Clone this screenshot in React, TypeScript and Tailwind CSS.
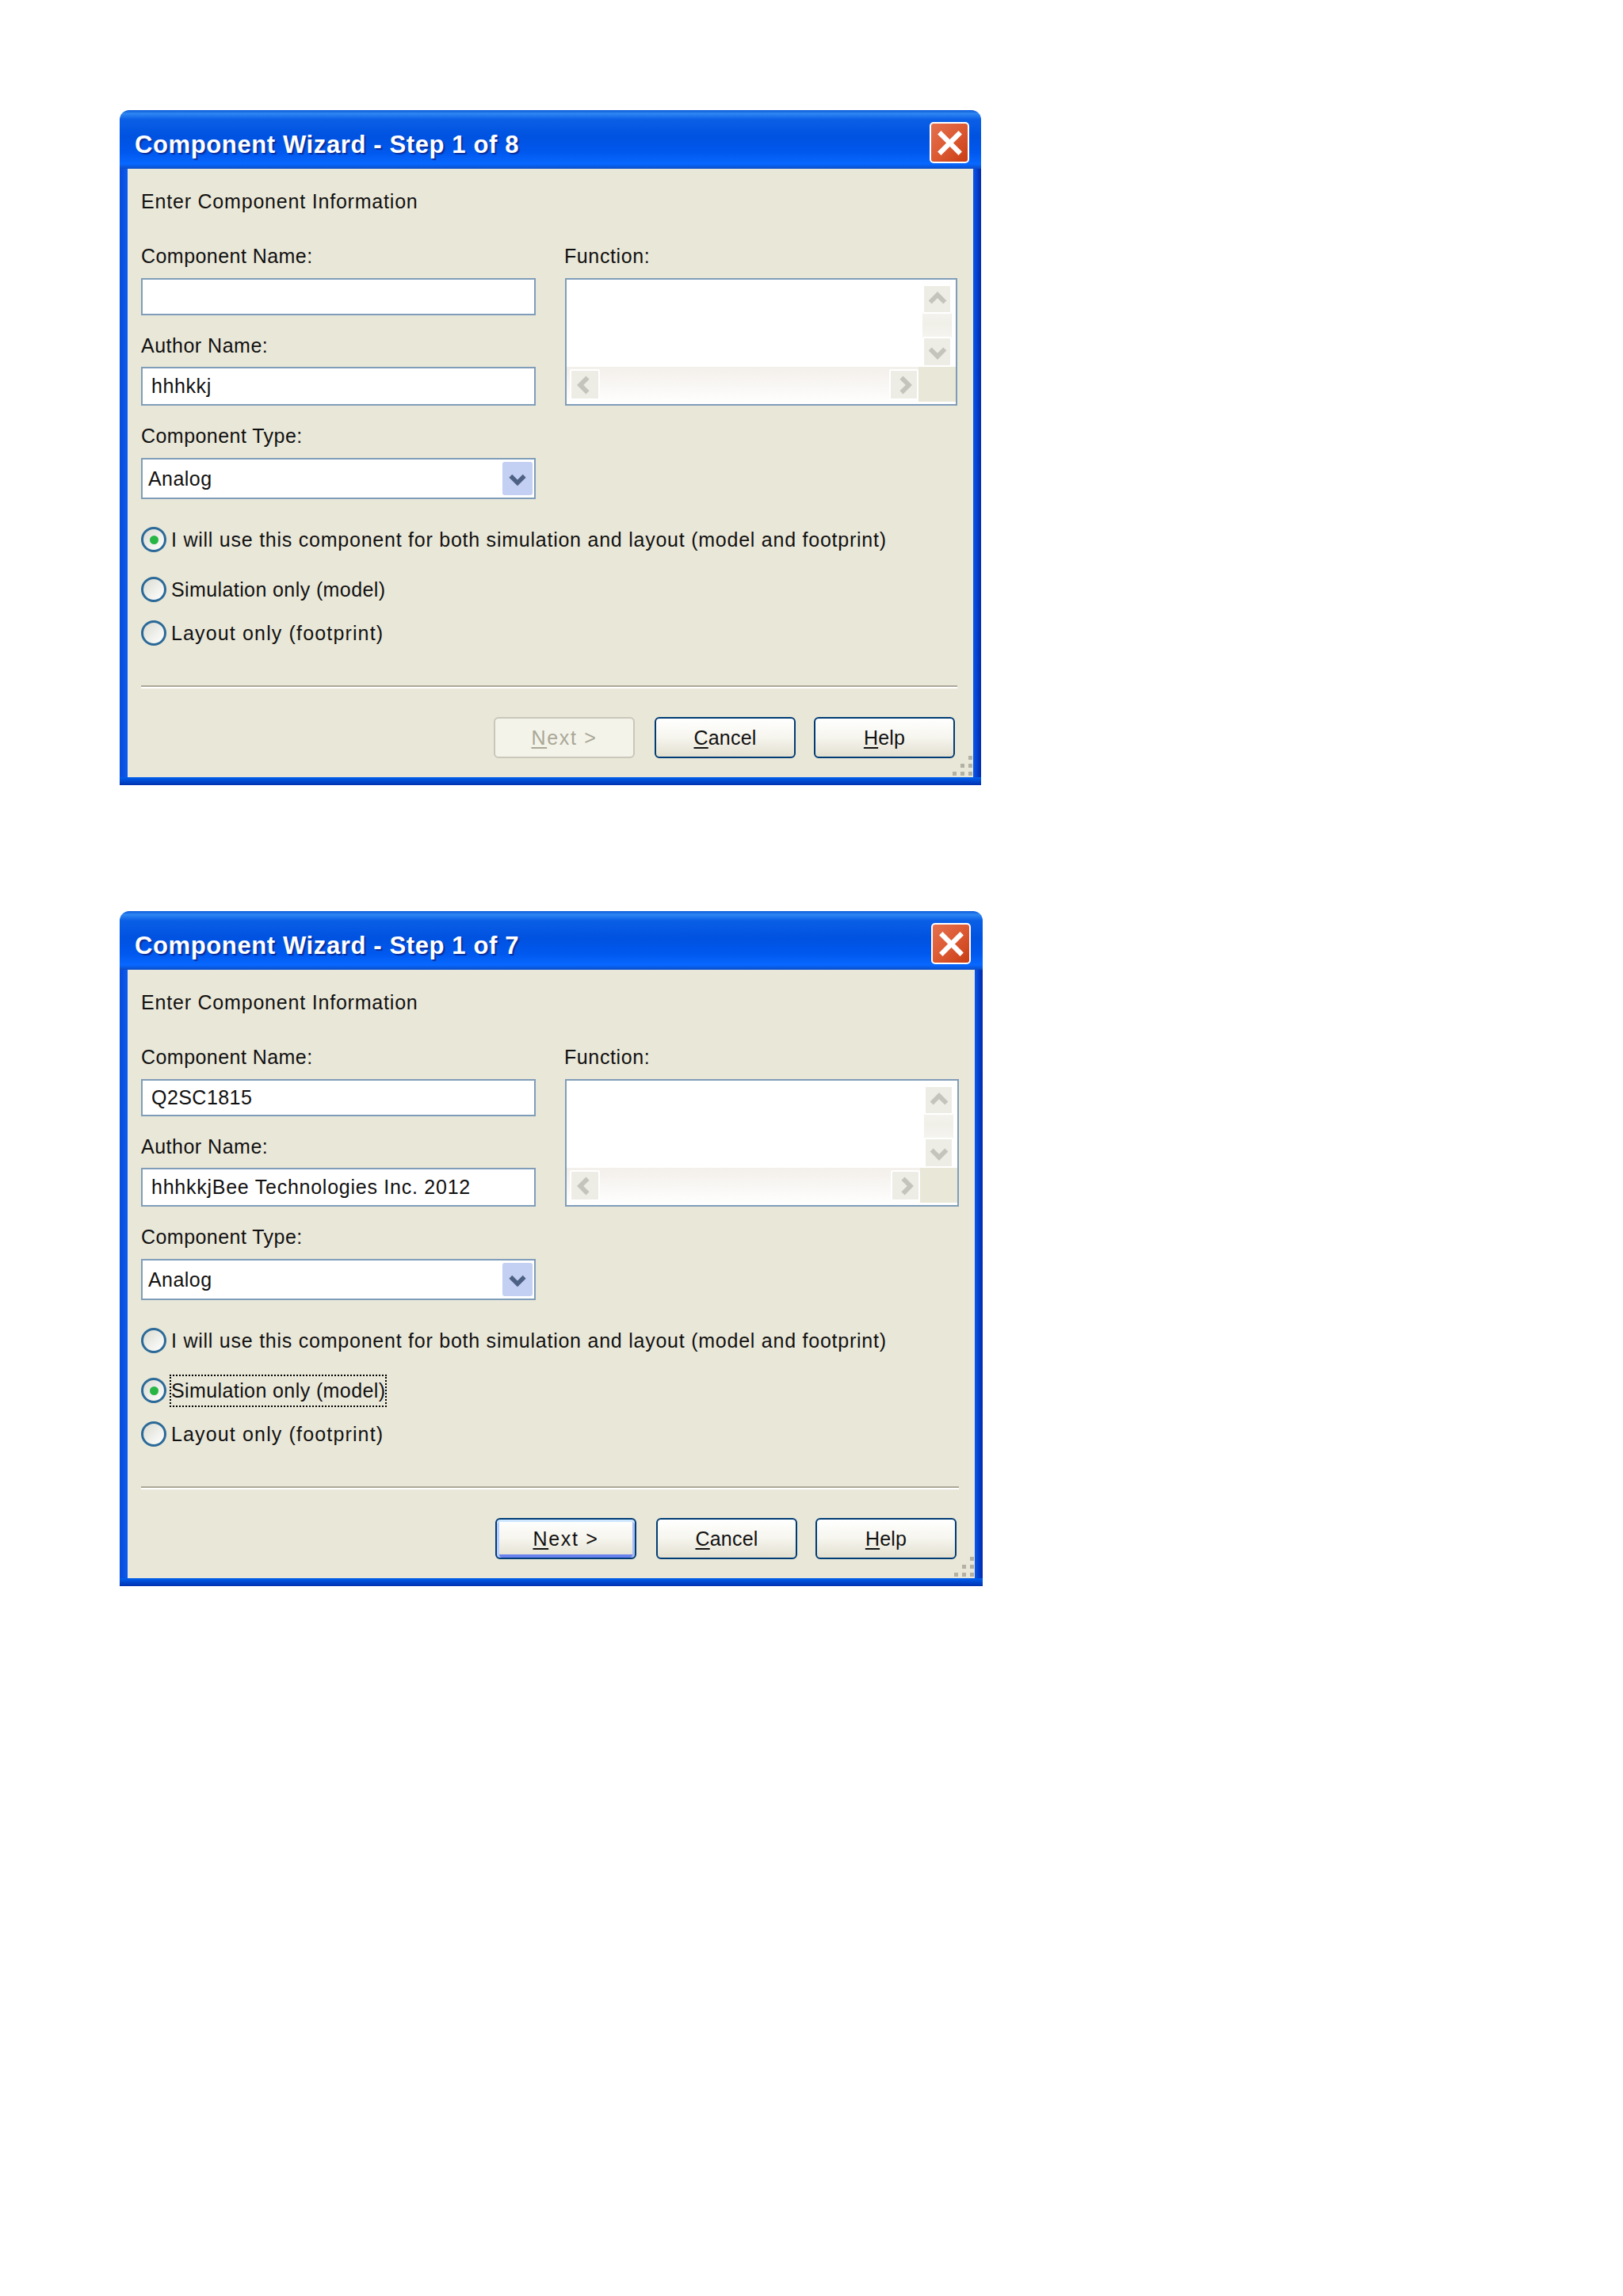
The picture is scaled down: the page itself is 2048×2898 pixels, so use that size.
import React from 'react';

const Chevron = ({ dir, className }: { dir: 'up' | 'down' | 'left' | 'right'; className: string }) => {
  const points = {
    up: '4,15 12,7 20,15',
    down: '4,9 12,17 20,9',
    left: '15,4 7,12 15,20',
    right: '9,4 17,12 9,20',
  };
  return (
    <svg viewBox="0 0 24 24" fill="none" stroke="currentColor" strokeWidth="5" className={className}>
      <polyline points={points[dir]} />
    </svg>
  );
};

const ScrollButton = ({ dir, className }: { dir: 'up' | 'down' | 'left' | 'right'; className: string }) => (
  <div className={`flex items-center justify-center bg-[#eeede5] rounded-[2px] border-2 border-white text-[#c4c4bd] ${className}`}>
    <Chevron dir={dir} className="w-[28px] h-[28px]" />
  </div>
);

const Field = ({ value, className }: { value: string; className: string }) => (
  <div className={`flex items-center bg-white border-2 border-[#7f9db9] pl-[11px] text-[25px] text-[#111] ${className}`}>
    {value}
  </div>
);

const Radio = ({ checked, focused, label, className }: { checked: boolean; focused?: boolean; label: string; className: string }) => (
  <div className={`flex items-center h-[32px] ${className}`}>
    <div className="flex items-center justify-center w-[32px] h-[32px] rounded-full border-[3px] border-[#2b6a98] bg-gradient-to-br from-[#dcdcd3] to-white">
      {checked && <div className="w-[11px] h-[11px] rounded-full bg-[#27b545]" />}
    </div>
    <span className={`ml-[6px] text-[25px] text-[#111] ${focused ? 'leading-[37px] outline-dotted outline-2 outline-black' : 'leading-[30px]'}`}>
      {label}
    </span>
  </div>
);

const Button = ({ letter, rest, kind, tracking }: { letter: string; rest: string; kind: 'normal' | 'disabled' | 'default'; tracking: string }) => {
  const styles = {
    normal: 'border-[#003c74] bg-gradient-to-b from-white via-[#f6f5ee] to-[#e3e0d0] text-[#111]',
    disabled: 'border-[#c9c7ba] bg-[#f4f3ea] text-[#a9a796]',
    default: 'border-[#003c74] bg-gradient-to-b from-white via-[#f6f5ee] to-[#e3e0d0] text-[#111] shadow-[inset_0_3px_0_#cee7ff,inset_3px_0_0_#b6ceff,inset_-3px_0_0_#a8bdf2,inset_0_-4px_0_#6982ee]',
  };
  return (
    <div className={`flex items-center justify-center w-[178px] h-[52px] pt-[2px] rounded-[6px] border-2 text-[25px] whitespace-pre ${tracking} ${styles[kind]}`}>
      <span className="underline underline-offset-[3px]">{letter}</span>
      {rest}
    </div>
  );
};

type WizardProps = {
  steps: number;
  width: string;
  componentName: string;
  authorName: string;
  selected: 'both' | 'simulation';
  nextEnabled: boolean;
};

const Wizard = ({ steps, width, componentName, authorName, selected, nextEnabled }: WizardProps) => (
  <div className={`flex flex-col rounded-t-[12px] overflow-hidden ${width}`}>
    <div className="flex items-center justify-between h-[74px] pt-[8px] pl-[19px] pr-[15px] bg-[linear-gradient(180deg,#0a5ad8_0%,#2f86f2_6%,#0a5fe6_16%,#0052e0_45%,#0058ee_72%,#0868ff_92%,#0a4cc8_100%)]">
      <span className="pt-[6px] text-[31px] font-bold tracking-[0.62px] text-white [text-shadow:2px_2px_1px_#0b2f9c] font-['Liberation_Sans',sans-serif]">
        {`Component Wizard - Step 1 of ${steps}`}
      </span>
      <div className="flex items-center justify-center w-[50px] h-[52px] rounded-[5px] border-2 border-white bg-gradient-to-br from-[#e4704f] via-[#dc5a32] to-[#c83c12]">
        <svg viewBox="0 0 24 24" className="w-[33px] h-[33px]" stroke="#fff" strokeWidth="4.5" strokeLinecap="square">
          <path d="M4 4 L20 20 M20 4 L4 20" />
        </svg>
      </div>
    </div>

    <div className="flex-1 px-[10px] pb-[10px] bg-[linear-gradient(to_top,#0030b0_0,#0060ee_10px,transparent_10px),linear-gradient(to_left,#0028a8_0,#0a58ee_10px,transparent_10px),linear-gradient(to_right,#0a4ad8_0,#0a5cf0_10px)]">
      <div className="relative h-[768px] bg-[#e9e7d8] pl-[17px] pr-[20px] pt-[26px] font-['Liberation_Sans',sans-serif]">
        <div className="h-[30px] leading-[30px] text-[25px] tracking-[0.8px] text-[#111]">Enter Component Information</div>

        <div className="flex gap-[37px] mt-[39px]">
          <div className="w-[498px] shrink-0">
            <div className="h-[30px] leading-[30px] text-[25px] tracking-[0.45px] text-[#111]">Component Name:</div>
            <Field value={componentName} className="h-[47px] mt-[13px] tracking-[0.45px]" />
            <div className="h-[30px] leading-[30px] text-[25px] tracking-[0.5px] text-[#111] mt-[23px]">Author Name:</div>
            <Field value={authorName} className={`h-[49px] mt-[12px] ${authorName.length > 10 ? 'tracking-[0.75px]' : 'tracking-[0.6px]'}`} />
            <div className="h-[30px] leading-[30px] text-[25px] tracking-[0.45px] text-[#111] mt-[23px]">Component Type:</div>
            <div className="flex items-center justify-between h-[52px] mt-[13px] bg-white border-2 border-[#7f9db9] pl-[7px] pr-[2px] text-[25px] tracking-[0.45px] text-[#111]">
              <span className="pt-[2px]">Analog</span>
              <div className="flex items-center justify-center w-[38px] h-[42px] rounded-[3px] bg-[#c3cff3] text-[#4d6185]">
                <Chevron dir="down" className="w-[26px] h-[26px]" />
              </div>
            </div>
          </div>

          <div className="flex-1">
            <div className="-ml-[1px] h-[30px] leading-[30px] text-[25px] tracking-[0.6px] text-[#111]">Function:</div>
            <div className="flex flex-col h-[161px] mt-[13px] bg-white border-2 border-[#7f9db9]">
              <div className="flex flex-1">
                <div className="flex-1" />
                <div className="flex flex-col justify-between w-[37px] mr-[5px] pt-[6px] bg-gradient-to-b from-white via-[#f0efe8] to-white">
                  <ScrollButton dir="up" className="h-[37px]" />
                  <ScrollButton dir="down" className="h-[38px]" />
                </div>
              </div>
              <div className="flex h-[47px]">
                <div className="flex justify-between flex-1 pl-[4px] pt-[3px] pb-[5px] bg-gradient-to-b from-[#f3efea] to-white">
                  <ScrollButton dir="left" className="w-[38px]" />
                  <ScrollButton dir="right" className="w-[37px]" />
                </div>
                <div className="w-[47px] mb-[3px] bg-[#e9e7d8]" />
              </div>
            </div>
          </div>
        </div>

        <div className="tracking-[0.76px]">
          <Radio checked={selected === 'both'} label="I will use this component for both simulation and layout (model and footprint)" className="mt-[35px]" />
        </div>
        <div className="tracking-[0.4px]">
          <Radio checked={selected === 'simulation'} focused={selected === 'simulation'} label="Simulation only (model)" className="mt-[31px]" />
        </div>
        <div className="tracking-[1.15px]">
          <Radio checked={false} label="Layout only (footprint)" className="mt-[23px]" />
        </div>

        <div className="h-[4px] mt-[50px] bg-[linear-gradient(180deg,#aca899_50%,#ffffff_50%)]" />

        <div className="flex justify-end gap-[23px] mt-[36px] pr-[3px]">
          <div className="mr-[2px]">
            <Button letter="N" rest="ext >" tracking="tracking-[1.7px]" kind={nextEnabled ? 'default' : 'disabled'} />
          </div>
          <Button letter="C" rest="ancel" tracking="tracking-[0.2px]" kind="normal" />
          <Button letter="H" rest="elp" tracking="tracking-[0.2px]" kind="normal" />
        </div>

        {/* resize grip */}
        <div className="absolute right-[1px] bottom-[2px] grid grid-cols-3 gap-[5px]">
          {[0, 0, 1, 0, 1, 1, 1, 1, 1].map((on, i) => (
            <div key={i} className={`w-[5px] h-[5px] ${on ? 'bg-[#b3b1a3]' : ''}`} />
          ))}
        </div>
      </div>
    </div>
  </div>
);

export default function App() {
  return (
    <div className="min-h-[2898px] bg-white pt-[139px] pl-[151px]">
      <div className="flex flex-col gap-[159px]">
        <Wizard
          steps={8}
          width="w-[1087px]"
          componentName=""
          authorName="hhhkkj"
          selected="both"
          nextEnabled={false}
        />
        <Wizard
          steps={7}
          width="w-[1089px]"
          componentName="Q2SC1815"
          authorName="hhhkkjBee Technologies Inc. 2012"
          selected="simulation"
          nextEnabled
        />
      </div>
    </div>
  );
}
